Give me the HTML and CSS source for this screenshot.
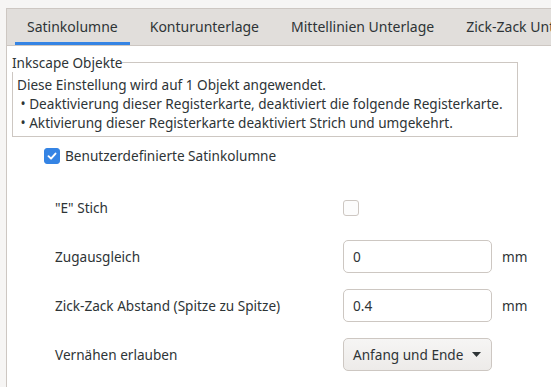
FILE: index.html
```html
<!DOCTYPE html>
<html lang="de">
<head>
<meta charset="utf-8">
<title>Satinkolumne</title>
<link rel="stylesheet" href="styles.css">
</head>
<body>
<div class="notebook">
  <div class="tabs">
    <div class="tab active">Satinkolumne</div>
    <div class="tab">Konturunterlage</div>
    <div class="tab">Mittellinien Unterlage</div>
    <div class="tab">Zick-Zack Unterlage</div>
  </div>
  <div class="page">
    <fieldset class="frame">
      <legend class="frame-label">Inkscape Objekte</legend>
      <div class="frame-body">
        <div>Diese Einstellung wird auf 1 Objekt angewendet.</div>
        <div>&nbsp;• Deaktivierung dieser Registerkarte, deaktiviert die folgende Registerkarte.</div>
        <div>&nbsp;• Aktivierung dieser Registerkarte deaktiviert Strich und umgekehrt.</div>
      </div>
    </fieldset>
    <label class="check-row">
      <span class="check checked">
        <svg viewBox="0 0 16 16" width="16" height="16"><path d="M4 8.2 L6.9 11 L12 5.2" fill="none" stroke="#fff" stroke-width="2.2" stroke-linecap="round" stroke-linejoin="round"/></svg>
      </span>
      <span>Benutzerdefinierte Satinkolumne</span>
    </label>
    <div class="params">
      <div class="label">"E" Stich</div>
      <div class="control"><span class="check"></span></div>
      <div class="unit"></div>

      <div class="label">Zugausgleich</div>
      <div class="control"><div class="entry">0</div></div>
      <div class="unit">mm</div>

      <div class="label">Zick-Zack Abstand (Spitze zu Spitze)</div>
      <div class="control"><div class="entry">0.4</div></div>
      <div class="unit">mm</div>

      <div class="label">Vernähen erlauben</div>
      <div class="control">
        <div class="combo"><span>Anfang und Ende</span>
          <svg class="arrow" viewBox="0 0 9 5" width="9" height="5"><path d="M0 0 H9 L4.5 5 Z" fill="#2e3436"/></svg>
        </div>
      </div>
      <div class="unit"></div>
    </div>
  </div>
</div>
</body>
</html>
```

FILE: styles.css
```css
html, body {
  margin: 0;
  padding: 0;
}
body {
  background: #f6f5f4;
  font-family: "Noto Sans", "Open Sans", sans-serif;
  font-size: 13.6px;
  line-height: 19px;
  color: #2e3436;
  padding: 8px 0 0 6px;
  height: 387px;
  box-sizing: border-box;
  overflow: hidden;
}
.notebook {
  border-left: 1px solid #cdc7c2;
  border-top: 1px solid #cdc7c2;
  background: #ffffff;
  height: 100%;
}
.tabs {
  display: flex;
  gap: 8px;
  padding-left: 8px;
  height: 36px;
  background: #e1dedb;
  border-bottom: 1px solid #cdc7c2;
  white-space: nowrap;
  overflow: hidden;
  font-size: 14px;
}
.tab {
  padding: 0 12px;
  display: flex;
  align-items: center;
  box-sizing: border-box;
  height: 36px;
  border-bottom: 3px solid transparent;
  padding-top: 1px;
  color: #2e3436;
}
.tab.active {
  border-bottom-color: #3584e4;
}
.page {
  padding: 7px 0 0 5px;
}
.frame {
  width: 506px;
  box-sizing: border-box;
  margin: 0;
  border: 1px solid #cdc7c2;
  padding: 0 4px 4px 4px;
  min-width: 0;
}
.frame-label {
  padding: 0;
  margin-left: -5px;
}
.frame-body {
  padding-top: 3px;
  white-space: nowrap;
}
.check-row {
  display: flex;
  align-items: center;
  gap: 5px;
  margin: 9px 0 0 32px;
  height: 19px;
}
.check {
  width: 16px;
  height: 16px;
  box-sizing: border-box;
  border: 1px solid #cdc7c2;
  border-radius: 3px;
  background: #fcfcfc;
  display: inline-flex;
  align-items: center;
  justify-content: center;
  flex: none;
}
.check.checked {
  background: #3584e4;
  border-color: #3584e4;
}
.check svg {
  display: block;
}
.params {
  display: grid;
  grid-template-columns: 278px 149px auto;
  column-gap: 10px;
  row-gap: 16px;
  margin: 26px 0 0 43px;
  align-items: center;
}
.params > div {
  height: 33px;
  display: flex;
  align-items: center;
}
.entry {
  width: 100%;
  height: 33px;
  box-sizing: border-box;
  border: 1px solid #cdc7c2;
  border-radius: 5px;
  background: #ffffff;
  padding: 0 9px;
  display: flex;
  align-items: center;
}
.combo {
  width: 100%;
  height: 33px;
  box-sizing: border-box;
  border: 1px solid #cdc7c2;
  border-radius: 5px;
  background: linear-gradient(#f6f5f4, #edebe9);
  padding: 0 9px;
  display: flex;
  align-items: center;
  gap: 9px;
  white-space: nowrap;
}
.arrow {
  display: block;
  flex: none;
}
```
